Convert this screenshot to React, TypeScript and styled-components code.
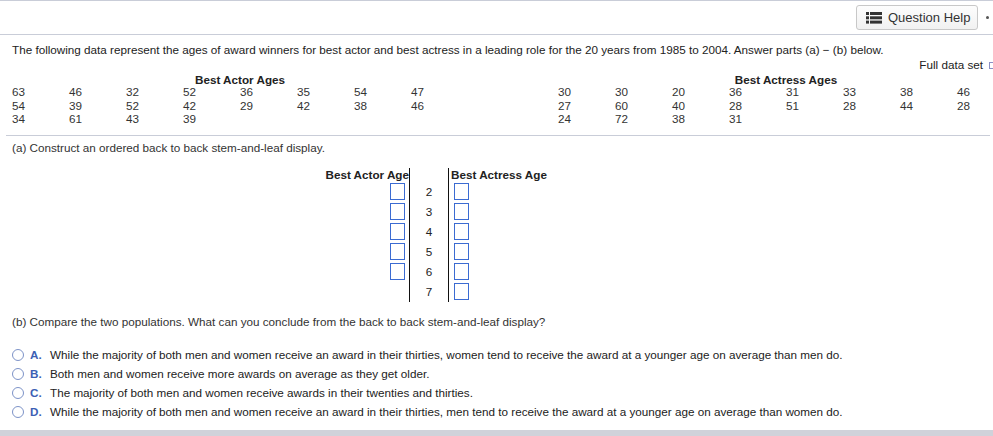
import React from 'react';
import styled, { createGlobalStyle } from 'styled-components';

const GlobalStyle = createGlobalStyle`
    html, body {
        margin: 0;
        padding: 0;
        background: #ffffff;
    }
    body {
        font-family: "Liberation Sans", Arial, sans-serif;
        font-size: 11.7px;
        color: #222;
        overflow: hidden;
    }
`;

const Page = styled.div`
    width: 993px;
    height: 436px;
    display: flex;
    flex-direction: column;
    overflow: hidden;
`;

const TopBar = styled.div`
    height: 33px;
    border-top: 1px solid #c9cdd8;
    border-bottom: 1px solid #c9cdd8;
    display: flex;
    align-items: center;
    justify-content: flex-end;
    padding-right: 4px;
    box-sizing: content-box;
    flex-shrink: 0;
`;

const HelpButton = styled.button`
    height: 25px;
    width: 122px;
    display: flex;
    align-items: center;
    gap: 6px;
    padding: 0 0 0 9px;
    border: 1px solid #c8c8c8;
    border-radius: 3px;
    background: linear-gradient(#fdfdfd, #f1f1f1);
    font-family: "Liberation Sans", Arial, sans-serif;
    font-size: 13px;
    color: #333;
`;

const Dot = styled.span`
    width: 3px;
    height: 3px;
    border-radius: 50%;
    background: #555;
    margin-left: 8px;
`;

const Content = styled.div`
    flex: 1;
    min-width: 0;
    padding: 0 0 0 12px;
`;

const Intro = styled.p`
    margin: 8px 0 0;
    line-height: 14px;
`;

const FullData = styled.div`
    display: flex;
    justify-content: flex-end;
    align-items: center;
    gap: 6px;
    margin-top: 1px;
    line-height: 14px;
    margin-right: -1px;
`;

const TinyIcon = styled.span`
    width: 5px;
    height: 7px;
    border: 1px solid #8a8fc4;
    box-sizing: border-box;
`;

const DataSection = styled.section`
    margin: 1px 3px 0 -6px;
    padding: 0 0 9px 6px;
    border-bottom: 1px solid #c9cdd8;
    display: flex;
    gap: 90px;
    overflow: hidden;
`;

const DataTable = styled.div`
    width: 456px;
    flex-shrink: 0;
`;

const TableTitle = styled.div`
    text-align: center;
    font-weight: bold;
    line-height: 13px;
`;

const NumberGrid = styled.div`
    display: grid;
    grid-template-columns: repeat(8, 57px);
    line-height: 13.5px;
    color: #333;
    margin-top: -1px;
`;

const PartLabel = styled.p<{ $top: number }>`
    margin: ${(p) => p.$top}px 0 0;
    line-height: 14px;
    color: #333;
`;

const StemLeaf = styled.div`
    display: flex;
    margin: 13px 0 0 300px;
`;

const SideColumn = styled.div<{ $align: 'left' | 'right' }>`
    width: 97px;
    display: flex;
    flex-direction: column;
    align-items: ${(p) => (p.$align === 'right' ? 'flex-end' : 'flex-start')};
`;

const SideTitle = styled.div<{ $pad: number }>`
    height: 14px;
    line-height: 14px;
    font-weight: bold;
    white-space: nowrap;
    padding-left: ${(p) => p.$pad}px;
`;

const BoxRow = styled.div<{ $align: 'left' | 'right' }>`
    height: 20px;
    padding-top: 1px;
    box-sizing: border-box;
    ${(p) => (p.$align === 'right' ? 'padding-right: 4px;' : 'padding-left: 5px;')}
`;

const LeafBox = styled.div`
    width: 15px;
    height: 17px;
    border: 1px solid #3b6bd2;
    box-sizing: border-box;
`;

const StemColumn = styled.div`
    width: 38px;
    border-left: 1px solid #111;
    border-right: 1px solid #111;
    padding-top: 14px;
    box-sizing: content-box;
`;

const Stem = styled.div`
    height: 20px;
    line-height: 20px;
    text-align: center;
    color: #222;
`;

const Options = styled.div`
    margin-top: 17px;
    display: flex;
    flex-direction: column;
`;

const Option = styled.label`
    height: 19px;
    display: flex;
    align-items: center;
    line-height: 14px;
`;

const Radio = styled.span`
    width: 12px;
    height: 12px;
    border-radius: 50%;
    border: 1px solid #7d93c8;
    box-sizing: border-box;
    margin-right: 6px;
`;

const Letter = styled.span`
    width: 20px;
    color: #3c5fb4;
    font-weight: bold;
`;

const BottomBar = styled.div`
    height: 6px;
    background: #d0d2da;
    flex-shrink: 0;
`;

const ListIcon = () => (
    <svg width="16" height="12" viewBox="0 0 16 12">
        {[0, 4.3, 8.6].map((y) => (
            <g key={y} fill="#333">
                <rect x="0" y={y} width="3" height="3" />
                <rect x="4" y={y} width="12" height="3" />
            </g>
        ))}
    </svg>
);

const actorAges = [
    [63, 46, 32, 52, 36, 35, 54, 47],
    [54, 39, 52, 42, 29, 42, 38, 46],
    [34, 61, 43, 39],
];

const actressAges = [
    [30, 30, 20, 36, 31, 33, 38, 46],
    [27, 60, 40, 28, 51, 28, 44, 28],
    [24, 72, 38, 31],
];

const stems = [2, 3, 4, 5, 6, 7];

const options = [
    { key: 'A', text: 'While the majority of both men and women receive an award in their thirties, women tend to receive the award at a younger age on average than men do.' },
    { key: 'B', text: 'Both men and women receive more awards on average as they get older.' },
    { key: 'C', text: 'The majority of both men and women receive awards in their twenties and thirties.' },
    { key: 'D', text: 'While the majority of both men and women receive an award in their thirties, men tend to receive the award at a younger age on average than women do.' },
];

const AgeTable = ({ title, rows }: { title: string; rows: number[][] }) => (
    <DataTable>
        <TableTitle>{title}</TableTitle>
        <NumberGrid>
            {rows.map((row, r) =>
                Array.from({ length: 8 }).map((_, c) => (
                    <span key={`${r}-${c}`}>{row[c] ?? ''}</span>
                ))
            )}
        </NumberGrid>
    </DataTable>
);

const App = () => (
    <>
        <GlobalStyle />
        <Page>
            <TopBar>
                <HelpButton>
                    <ListIcon />
                    Question Help
                </HelpButton>
                <Dot />
            </TopBar>
            <Content>
                <Intro>
                    The following data represent the ages of award winners for best actor and best actress in a leading role for the 20 years from 1985 to 2004. Answer parts (a) − (b) below.
                </Intro>
                <FullData>
                    Full data set <TinyIcon />
                </FullData>
                <DataSection>
                    <AgeTable title="Best Actor Ages" rows={actorAges} />
                    <AgeTable title="Best Actress Ages" rows={actressAges} />
                </DataSection>
                <PartLabel $top={5}>(a) Construct an ordered back to back stem-and-leaf display.</PartLabel>
                <StemLeaf>
                    <SideColumn $align="right">
                        <SideTitle $pad={0}>Best Actor Age</SideTitle>
                        {stems.slice(0, 5).map((s) => (
                            <BoxRow key={s} $align="right">
                                <LeafBox />
                            </BoxRow>
                        ))}
                    </SideColumn>
                    <StemColumn>
                        {stems.map((s) => (
                            <Stem key={s}>{s}</Stem>
                        ))}
                    </StemColumn>
                    <SideColumn $align="left">
                        <SideTitle $pad={2}>Best Actress Age</SideTitle>
                        {stems.map((s) => (
                            <BoxRow key={s} $align="left">
                                <LeafBox />
                            </BoxRow>
                        ))}
                    </SideColumn>
                </StemLeaf>
                <PartLabel $top={13}>
                    (b) Compare the two populations. What can you conclude from the back to back stem-and-leaf display?
                </PartLabel>
                <Options>
                    {options.map((o) => (
                        <Option key={o.key}>
                            <Radio />
                            <Letter>{o.key}.</Letter>
                            {o.text}
                        </Option>
                    ))}
                </Options>
            </Content>
            <BottomBar />
        </Page>
    </>
);

export default App;
